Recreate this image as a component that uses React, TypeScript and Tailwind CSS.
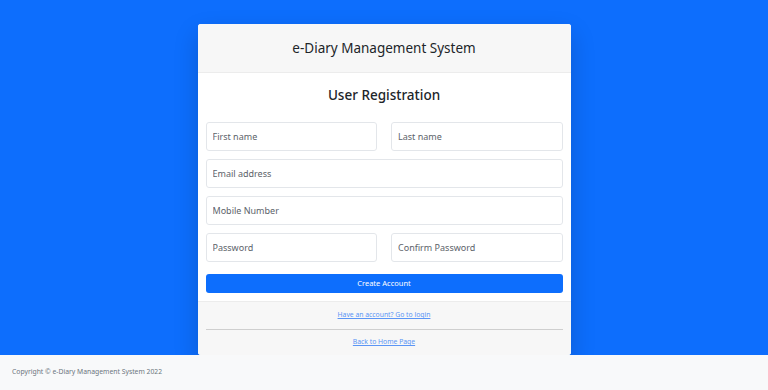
import React from "react";

const FONT = { fontFamily: '"Noto Sans", "Open Sans", sans-serif' };

function Field({ placeholder }: { placeholder: string }) {
  return (
    <input
      placeholder={placeholder}
      className="h-[29px] w-full rounded-[3px] border border-[#e3e6ea] bg-white px-[6px] text-[9px] text-[#333] placeholder:text-[#5c636a] outline-none"
      style={FONT}
    />
  );
}

export default function App() {
  return (
    <div className="flex min-h-[390px] flex-col" style={FONT}>
      <main className="flex h-[355px] justify-center bg-[#0d6efd] pt-[24px]">
        <div className="flex h-[331px] w-[373px] flex-col overflow-hidden rounded-[3px] bg-white shadow-[0_10px_24px_rgba(0,0,0,0.18)]">
          <div className="flex h-[49px] shrink-0 items-center justify-center border-b border-[#ececec] bg-[#f7f7f7]">
            <h4 className="pt-[1px] text-[13.5px] text-[#212529]">e-Diary Management System</h4>
          </div>
          <div className="flex flex-col px-[8px] pb-[8px]">
            <h3 className="flex h-[49px] items-center justify-center pb-[5px] text-[13.5px] font-medium text-[#212529]">
              User Registration
            </h3>
            <div className="flex flex-col gap-[8px]">
              <div className="grid grid-cols-2 gap-[14px]">
                <Field placeholder="First name" />
                <Field placeholder="Last name" />
              </div>
              <Field placeholder="Email address" />
              <Field placeholder="Mobile Number" />
              <div className="grid grid-cols-2 gap-[14px]">
                <Field placeholder="Password" />
                <Field placeholder="Confirm Password" />
              </div>
            </div>
            <button className="mt-[12px] h-[19px] w-full rounded-[3px] bg-[#0d6efd] text-[7.5px] text-white">
              Create Account
            </button>
          </div>
          <div className="flex flex-1 flex-col border-t border-[#ececec] bg-[#f7f7f7] px-[8px]">
            <div className="flex h-[27px] items-center justify-center">
              <a href="#" className="text-[6.8px] text-[#5b95f5] underline">
                Have an account? Go to login
              </a>
            </div>
            <div className="h-px bg-[#cfcfcf]" />
            <div className="flex flex-1 items-center justify-center">
              <a href="#" className="text-[6.8px] text-[#5b95f5] underline">
                Back to Home Page
              </a>
            </div>
          </div>
        </div>
      </main>
      <footer className="flex h-[35px] items-center bg-[#f8f9fa] px-[12px]">
        <span className="text-[6.8px] text-[#6c757d]">Copyright © e-Diary Management System 2022</span>
      </footer>
    </div>
  );
}
